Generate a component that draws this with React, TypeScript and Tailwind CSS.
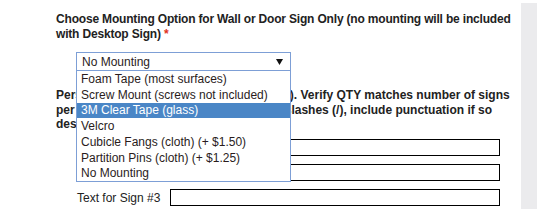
import React from "react";

const options = [
  "Foam Tape (most surfaces)",
  "Screw Mount (screws not included)",
  "3M Clear Tape (glass)",
  "Velcro",
  "Cubicle Fangs (cloth) (+ $1.50)",
  "Partition Pins (cloth) (+ $1.25)",
  "No Mounting",
];

const selected = "3M Clear Tape (glass)";

export default function App() {
  return (
    <div className="relative w-[541px] h-[209px] overflow-hidden bg-white font-['Liberation_Sans',Arial,sans-serif] text-[#222]">
      <div className="flex">
        <div className="w-[521px] pl-[56px] pt-[12px]">
          <p className="whitespace-nowrap text-[12px] font-bold leading-[15px] tracking-[-0.18px]">
            Choose Mounting Option for Wall or Door Sign Only (no mounting will be included
            <br />
            with Desktop Sign) <span className="text-[#e0301e]">*</span>
          </p>

          <div className="relative ml-[20px] mt-[10px] w-[215px]">
            <div className="flex h-[19px] items-center justify-between border border-[#7d9fd6] bg-white pl-[5px] pr-[7px] text-[12px] text-[#2a1c1c]">
              <span>No Mounting</span>
              <svg width="7" height="6" viewBox="0 0 7 6" aria-hidden="true">
                <polygon points="0,0 7,0 3.5,6" fill="#111" />
              </svg>
            </div>
            <ul className="absolute left-0 top-full z-10 w-full border border-t-0 border-[#7d9fd6] bg-white text-[12px]">
              {options.map((opt) => (
                <li
                  key={opt}
                  className={
                    opt === selected
                      ? "flex h-[15.75px] items-center whitespace-nowrap pl-[4px] bg-[#4a86c6] text-white"
                      : "flex h-[15.75px] items-center whitespace-nowrap pl-[4px] text-[#2a1c1c]"
                  }
                >
                  {opt}
                </li>
              ))}
            </ul>
          </div>

          <p className="mt-[17px] whitespace-nowrap text-[12px] font-bold leading-[14.5px]">
            Personalized Text for Signs (up to 3 lines). Verify QTY matches number of signs
            <br />
            per sign. Separate each line of text with slashes (/), include punctuation if so
            <br />
            desired.
          </p>

          <div className="mt-[7px] flex flex-col gap-[7px]">
            {[1, 2, 3].map((n) => (
              <div key={n} className="flex items-center">
                <span className="w-[114px] shrink-0 whitespace-nowrap pl-[21px] text-[12px] text-[#222]">
                  Text for Sign #{n}
                </span>
                <input className="h-[17px] w-[330px] border border-black bg-white" />
              </div>
            ))}
          </div>
        </div>
        <div className="mt-[3px] h-[206px] w-[16px] shrink-0 bg-[#ebebed]" />
      </div>
    </div>
  );
}
